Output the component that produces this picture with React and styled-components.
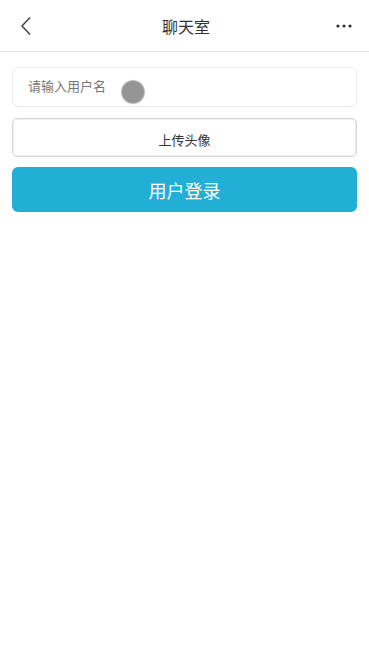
import React from 'react';
import styled, { createGlobalStyle } from 'styled-components';

const Global = createGlobalStyle`
  html, body {
    margin: 0;
    padding: 0;
    background: #fff;
    font-family: "Liberation Sans", "Noto Sans CJK SC", sans-serif;
  }
`;

const Page = styled.div`
  width: 369px;
  min-height: 660px;
  background: #fff;
  position: relative;
`;

const Header = styled.div`
  height: 51px;
  display: flex;
  align-items: center;
  justify-content: space-between;
  padding: 0 17px 0 20px;
  border-bottom: 1px solid #e3e3e3;
  background: #fff;
`;

const Title = styled.h1`
  margin: 0;
  font-size: 16px;
  font-weight: normal;
  color: #333;
`;

const IconBtn = styled.span`
  width: 20px;
  display: flex;
  align-items: center;
  justify-content: ${(p) => (p.right ? 'flex-end' : 'flex-start')};
`;

const Form = styled.div`
  display: flex;
  flex-direction: column;
  padding: 15px 12px;
  gap: 11px;
`;

const Field = styled.div`
  position: relative;
  height: 40px;
  border: 1px solid #ececec;
  border-radius: 6px;
  background: #fff;
  display: flex;
  align-items: center;
  padding: 0 15px;
  box-sizing: border-box;
`;

const Input = styled.input`
  border: none;
  outline: none;
  width: 100%;
  font-size: 13px;
  font-family: inherit;
  color: #333;
  background: transparent;
  padding: 0;
  margin-top: -2px;
  &::placeholder {
    color: #777;
  }
`;

const Upload = styled.div`
  height: 39px;
  border: 1px solid #d8d8d8;
  box-shadow: inset 0 0 0 1px #f0f0f0;
  border-radius: 5px;
  background: #fff;
  display: flex;
  align-items: center;
  justify-content: center;
  padding-top: 4px;
  box-sizing: border-box;
  font-size: 13px;
  color: #333;
`;

const LoginButton = styled.button`
  height: 45px;
  margin-top: -1px;
  border: none;
  border-radius: 6px;
  background: #22afd6;
  color: #fff;
  font-size: 18px;
  font-family: inherit;
  cursor: pointer;
`;

const Touch = styled.span`
  position: absolute;
  left: 109px;
  top: 13px;
  width: 22px;
  height: 22px;
  border-radius: 50%;
  background: #959595;
  box-shadow: 0 0 1px 1px #bbb;
`;

export default function App() {
  return (
    <Page>
      <Global />
      <Header>
        <IconBtn>
          <svg width="12" height="20" viewBox="0 0 12 20">
            <path d="M10 1.5 L2 10 L10 18.5" fill="none" stroke="#444" strokeWidth="1.5" />
          </svg>
        </IconBtn>
        <Title>聊天室</Title>
        <IconBtn right>
          <svg width="16" height="4" viewBox="0 0 16 4">
            <circle cx="2" cy="2" r="1.6" fill="#333" />
            <circle cx="8" cy="2" r="1.6" fill="#333" />
            <circle cx="14" cy="2" r="1.6" fill="#333" />
          </svg>
        </IconBtn>
      </Header>
      <Form>
        <Field>
          <Input placeholder="请输入用户名" />
          <Touch />
        </Field>
        <Upload>上传头像</Upload>
        <LoginButton>用户登录</LoginButton>
      </Form>
    </Page>
  );
}
